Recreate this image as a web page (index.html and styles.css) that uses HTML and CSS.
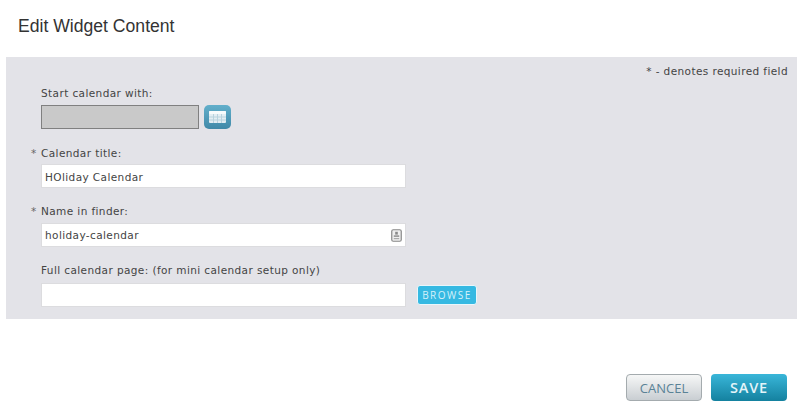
FILE: index.html
```html
<!DOCTYPE html>
<html lang="en">
<head>
  <meta charset="UTF-8">
  <title>Edit Widget Content</title>
  <link rel="stylesheet" href="styles.css">
</head>
<body>

<h1 class="title">Edit Widget Content</h1>

<div class="panel">
  <div class="note">* - denotes required field</div>

  <div class="field field-start">
    <label class="label">Start calendar with:</label>
    <div class="row">
      <div class="input input-disabled"></div>
      <button class="cal-btn" aria-label="Pick date">
        <svg width="17" height="12" viewBox="0 0 17 12">
          <rect x="0" y="0" width="17" height="12" rx="1" fill="#e3eef3"/>
          <rect x="0" y="0" width="17" height="3" rx="1" fill="#f7fbfc"/>
          <path d="M4.5 3V12M8.5 3V12M12.5 3V12M0 6H17M0 9H17" stroke="#b9d3de" stroke-width="1" fill="none"/>
        </svg>
      </button>
    </div>
  </div>

  <div class="field field-title">
    <label class="label"><span class="req">*</span>Calendar title:</label>
    <div class="input input-wide">HOliday Calendar</div>
  </div>

  <div class="field field-name">
    <label class="label"><span class="req">*</span>Name in finder:</label>
    <div class="input input-wide input-icon">
      holiday-calendar
      <svg width="11" height="13" viewBox="0 0 11 13">
        <rect x="0.75" y="0.75" width="9.5" height="11.5" rx="1.5" fill="#eee" stroke="#888" stroke-width="1.2"/>
        <rect x="4.2" y="2.8" width="2.6" height="2.8" fill="#888"/>
        <rect x="2.8" y="6.4" width="5.4" height="1.4" fill="#888"/>
        <rect x="2.8" y="9" width="5.4" height="1.2" fill="#aaa"/>
      </svg>
    </div>
  </div>

  <div class="field field-page">
    <label class="label">Full calendar page: (for mini calendar setup only)</label>
    <div class="row">
      <div class="input input-wide"></div>
      <button class="browse">BROWSE</button>
    </div>
  </div>
</div>

<div class="actions">
  <button class="cancel">CANCEL</button>
  <button class="save">SAVE</button>
</div>

</body>
</html>
```

FILE: styles.css
```css
* {
  box-sizing: border-box;
}

body {
  margin: 0;
  background: #fff;
  font-family: "DejaVu Sans", Verdana, sans-serif;
  font-size: 10.5px;
  letter-spacing: 0.4px;
  color: #444;
}

.title {
  margin: 0;
  padding: 16px 0 0 18px;
  height: 57px;
  font-family: "Liberation Sans", Arial, sans-serif;
  font-size: 17.6px;
  line-height: 20px;
  font-weight: normal;
  letter-spacing: 0;
  color: #333;
}

.panel {
  margin: 0 3px 0 6px;
  height: 262px;
  padding: 6px 9px 0 35px;
  background: #e3e3e8;
}

.note {
  height: 14px;
  text-align: right;
  line-height: 16px;
  color: #444;
}

.field {
  display: flex;
  flex-direction: column;
}

.field-start {
  margin-top: 8px;
}

.field-title {
  margin-top: 16px;
}

.field-name,
.field-page {
  margin-top: 15px;
}

.label {
  height: 14px;
  line-height: 16px;
  margin-bottom: 6px;
}

.field-title .label {
  margin-bottom: 5px;
}

.field-page .label {
  margin-bottom: 7px;
}

.req {
  display: inline-block;
  width: 10px;
  margin-left: -10px;
  color: #666;
}

.row {
  display: flex;
  align-items: center;
}

.input {
  height: 24px;
  line-height: 24px;
  padding: 0 3px;
  background: #fff;
  border: 1px solid #dcdcdf;
  color: #444;
}

.input-wide {
  width: 365px;
}

.input-disabled {
  width: 158px;
  background: #c9c9c9;
  border: 1px solid #808080;
}

.input-icon {
  display: flex;
  align-items: center;
  justify-content: space-between;
  padding-right: 3px;
}

.cal-btn {
  display: flex;
  align-items: center;
  justify-content: center;
  width: 27px;
  height: 24px;
  margin-left: 5px;
  padding: 0;
  border: none;
  border-radius: 5px;
  background: linear-gradient(#62afcb, #4089a8);
}

.browse {
  width: 60px;
  height: 20px;
  margin-left: 11px;
  padding: 0;
  border: 1px solid #e9f7fb;
  border-radius: 3px;
  background: #36b9e2;
  color: #d5f1fa;
  font-family: "Open Sans", Arial, sans-serif;
  font-size: 10px;
  letter-spacing: 1.5px;
}

.actions {
  display: flex;
  justify-content: flex-end;
  gap: 9px;
  margin-top: 55px;
  padding-right: 13px;
}

.actions button {
  height: 27px;
  padding: 0;
  border-radius: 4px;
  font-family: "Open Sans", Arial, sans-serif;
}

.cancel {
  width: 76px;
  border: 1px solid #a4abae;
  background: linear-gradient(#f6f7f7, #c9ced2);
  color: #5a8296;
  font-size: 13px;
  font-weight: 500;
  letter-spacing: 0;
}

.save {
  width: 76px;
  border: none;
  background: linear-gradient(#39b6d9, #14819f);
  color: #e4f4f9;
  font-size: 14.5px;
  font-weight: 600;
  letter-spacing: 0.8px;
}
```
